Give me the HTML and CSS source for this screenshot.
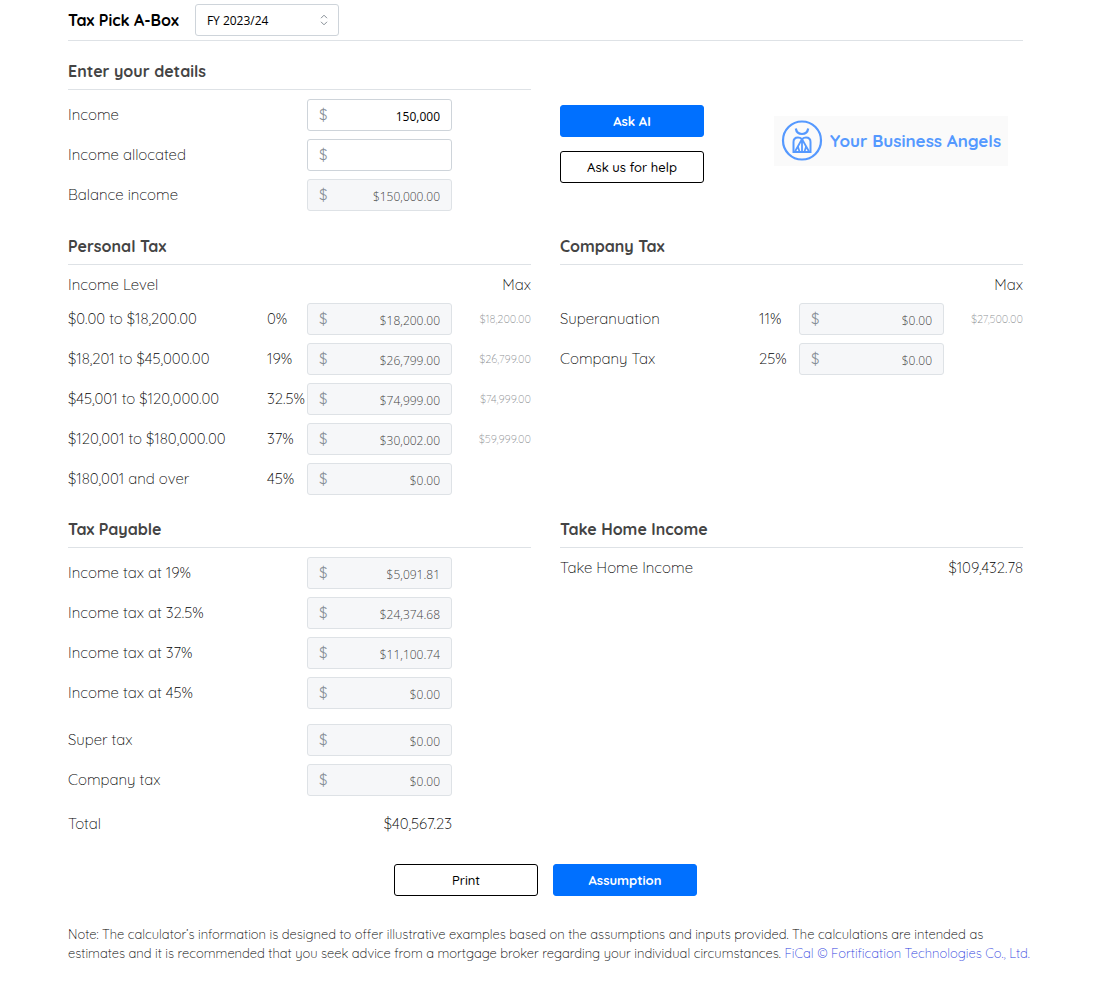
FILE: index.html
```html
<!DOCTYPE html>
<html lang="en">
<head>
    <meta charset="UTF-8">
    <meta name="viewport" content="width=device-width, initial-scale=1.0">
    <title>Tax Pick A-Box</title>
    <link rel="stylesheet" href="styles.css">
</head>
<body>
    <main class="container">
        <header class="page-header">
            <h1><label for="year">Tax Pick A-Box</label></h1>
            <div class="select-box">
                <select id="year" name="year">
                    <option>FY 2023/24</option>
                    <option>FY 2022/23</option>
                </select>
                <svg class="select-icon" viewBox="0 0 8 12" width="8" height="12" aria-hidden="true">
                    <path d="M1 4.2 L4 1.2 L7 4.2 M1 7.8 L4 10.8 L7 7.8"/>
                </svg>
            </div>
        </header>

        <div class="columns details">
            <section>
                <h2>Enter your details</h2>
                <div class="rows">
                    <div class="row">
                        <label for="income">Income</label>
                        <div class="money"><span>$</span><input type="text" id="income" value="150,000"></div>
                    </div>
                    <div class="row">
                        <label for="allocated">Income allocated</label>
                        <div class="money"><span>$</span><input type="text" id="allocated"></div>
                    </div>
                    <div class="row">
                        <label for="balance">Balance income</label>
                        <div class="money disabled"><span>$</span><input type="text" id="balance" value="$150,000.00" disabled></div>
                    </div>
                </div>
            </section>

            <div class="help">
                <div class="help-buttons">
                    <button type="button" class="btn primary">Ask AI</button>
                    <button type="button" class="btn">Ask us for help</button>
                </div>
                <div class="brand">
                    <svg viewBox="0 0 42 42" width="42" height="42" aria-hidden="true">
                        <circle cx="21" cy="20.5" r="19" stroke-width="2.2"/>
                        <path d="M14.8 8.5 C16 15.8 26 15.800 27.200 8.500" stroke-width="2.2"/>
                        <path d="M12.500 32 V22 Q12.500 17.500 17 17.500 Q20 17.500 21 19.500 Q22 17.500 25 17.500 Q29.500 17.500 29.500 22 V32 Z" stroke-width="2"/>
                        <path d="M21 19.500 V32 M20.500 20 L14 31.500 M21.500 20 L28 31.500 M17 27 L18.500 31.500 M25 27 L23.500 31.500" stroke-width="1.8"/>
                    </svg>
                    <span>Your Business Angels</span>
                </div>
            </div>
        </div>

        <div class="columns brackets">
            <section>
                <h2>Personal Tax</h2>
                <div class="rows">
                    <div class="row row-head">
                        <span>Income Level</span>
                        <span class="max-head">Max</span>
                    </div>
                    <div class="row">
                        <label for="level-0">$0.00 to $18,200.00</label>
                        <span class="rate">0%</span>
                        <div class="money disabled"><span>$</span><input type="text" id="level-0" value="$18,200.00" disabled></div>
                        <span class="max">$18,200.00</span>
                    </div>
                    <div class="row">
                        <label for="level-19">$18,201 to $45,000.00</label>
                        <span class="rate">19%</span>
                        <div class="money disabled"><span>$</span><input type="text" id="level-19" value="$26,799.00" disabled></div>
                        <span class="max">$26,799.00</span>
                    </div>
                    <div class="row">
                        <label for="level-32">$45,001 to $120,000.00</label>
                        <span class="rate">32.5%</span>
                        <div class="money disabled"><span>$</span><input type="text" id="level-32" value="$74,999.00" disabled></div>
                        <span class="max">$74,999.00</span>
                    </div>
                    <div class="row">
                        <label for="level-37">$120,001 to $180,000.00</label>
                        <span class="rate">37%</span>
                        <div class="money disabled"><span>$</span><input type="text" id="level-37" value="$30,002.00" disabled></div>
                        <span class="max">$59,999.00</span>
                    </div>
                    <div class="row">
                        <label for="level-45">$180,001 and over</label>
                        <span class="rate">45%</span>
                        <div class="money disabled"><span>$</span><input type="text" id="level-45" value="$0.00" disabled></div>
                    </div>
                </div>
            </section>

            <section>
                <h2>Company Tax</h2>
                <div class="rows">
                    <div class="row row-head">
                        <span class="max-head">Max</span>
                    </div>
                    <div class="row">
                        <label for="super">Superanuation</label>
                        <span class="rate">11%</span>
                        <div class="money disabled"><span>$</span><input type="text" id="super" value="$0.00" disabled></div>
                        <span class="max">$27,500.00</span>
                    </div>
                    <div class="row">
                        <label for="company">Company Tax</label>
                        <span class="rate">25%</span>
                        <div class="money disabled"><span>$</span><input type="text" id="company" value="$0.00" disabled></div>
                    </div>
                </div>
            </section>
        </div>

        <div class="columns results">
            <section>
                <h2>Tax Payable</h2>
                <div class="rows">
                    <div class="row">
                        <label for="tax-19">Income tax at 19%</label>
                        <div class="money disabled"><span>$</span><input type="text" id="tax-19" value="$5,091.81" disabled></div>
                    </div>
                    <div class="row">
                        <label for="tax-32">Income tax at 32.5%</label>
                        <div class="money disabled"><span>$</span><input type="text" id="tax-32" value="$24,374.68" disabled></div>
                    </div>
                    <div class="row">
                        <label for="tax-37">Income tax at 37%</label>
                        <div class="money disabled"><span>$</span><input type="text" id="tax-37" value="$11,100.74" disabled></div>
                    </div>
                    <div class="row">
                        <label for="tax-45">Income tax at 45%</label>
                        <div class="money disabled"><span>$</span><input type="text" id="tax-45" value="$0.00" disabled></div>
                    </div>
                </div>
                <div class="rows other-tax">
                    <div class="row">
                        <label for="super-tax">Super tax</label>
                        <div class="money disabled"><span>$</span><input type="text" id="super-tax" value="$0.00" disabled></div>
                    </div>
                    <div class="row">
                        <label for="company-tax">Company tax</label>
                        <div class="money disabled"><span>$</span><input type="text" id="company-tax" value="$0.00" disabled></div>
                    </div>
                </div>
                <div class="row total">
                    <span>Total</span>
                    <span class="total-value">$40,567.23</span>
                </div>
            </section>

            <section>
                <h2>Take Home Income</h2>
                <div class="take-home">
                    <span>Take Home Income</span>
                    <span>$109,432.78</span>
                </div>
            </section>
        </div>

        <div class="actions">
            <button type="button" class="btn">Print</button>
            <button type="button" class="btn primary">Assumption</button>
        </div>

        <p class="note">Note: The calculator’s information is designed to offer illustrative examples based on the assumptions and inputs provided. The calculations are intended as estimates and it is recommended that you seek advice from a mortgage broker regarding your individual circumstances. <a href="#">FiCal © Fortification Technologies Co., Ltd.</a></p>
    </main>
</body>
</html>
```
FILE: styles.css
```css
:root {
    --primary: #0070ff;
    --text: #000;
    --heading: #444;
    --line: #dee2e6;
    --border: #ced4da;
}

* {
    box-sizing: border-box;
}

body {
    margin: 0;
    background: #fff;
    color: var(--text);
    font-family: Quicksand, Lato, sans-serif;
    font-size: 15px;
    font-weight: 300;
    line-height: 20px;
}

.container {
    padding: 0 73px 20px 68px;
}

.page-header {
    display: flex;
    align-items: center;
    gap: 16px;
    padding: 4px 0;
    border-bottom: 1px solid var(--line);
}

h1, h2 {
    margin: 0;
    font-size: 16px;
    font-weight: 700;
    line-height: 20px;
}

h1 {
    color: #000;
}

h2 {
    padding-bottom: 8px;
    border-bottom: 1px solid var(--line);
    color: var(--heading);
}

.select-box {
    position: relative;
    width: 144px;
}

select {
    appearance: none;
    width: 100%;
    height: 32px;
    padding: 0 11px;
    border: 1px solid var(--border);
    border-radius: 3px;
    background: #fff;
    color: #000;
    font-family: "Open Sans", sans-serif;
    font-size: 12px;
}

.select-icon {
    position: absolute;
    top: 10px;
    right: 11px;
    fill: none;
    stroke: #868e96;
    pointer-events: none;
}

.columns {
    display: grid;
    grid-template-columns: 1fr 1fr;
    gap: 29px;
}

.details {
    margin-top: 20px;
}

.brackets {
    margin-top: 25px;
}

.results {
    margin-top: 24px;
}

.rows {
    display: grid;
    gap: 8px;
    padding-top: 9px;
}

.row {
    display: grid;
    grid-template-columns: 199px 40px 145px 1fr;
    align-items: center;
}

.row-head {
    min-height: 21px;
}

.money {
    display: flex;
    align-items: center;
    grid-column: 3;
    height: 32px;
    padding: 0 11px;
    border: 1px solid var(--border);
    border-radius: 3px;
    background: #fff;
    color: #868e96;
    font-weight: 400;
}

.money input {
    flex: 1;
    min-width: 0;
    padding: 2px 0 0;
    border: 0;
    outline: none;
    background: transparent;
    color: #000;
    font-family: "Open Sans", sans-serif;
    font-size: 12px;
    text-align: right;
}

.money.disabled {
    border-color: var(--line);
    background: #f6f7f9;
}

.money.disabled input {
    color: #444;
    font-weight: 300;
}

.max, .max-head {
    grid-column: 4;
    text-align: right;
}

.max {
    color: #909396;
    font-size: 11px;
}

.other-tax {
    padding-top: 15px;
}

.total {
    margin-top: 18px;
}

.total-value {
    grid-column: 3;
    text-align: right;
}

.take-home {
    display: flex;
    justify-content: space-between;
    padding-top: 10px;
}

.help {
    display: flex;
    align-items: flex-start;
    justify-content: space-between;
    padding: 44px 15px 0 0;
}

.help-buttons {
    display: grid;
    gap: 14px;
}

.btn {
    width: 144px;
    height: 32px;
    border: 1px solid #000;
    border-radius: 3px;
    background: #fff;
    color: #000;
    font-family: inherit;
    font-size: 13px;
    font-weight: 500;
}

.btn.primary {
    border-color: var(--primary);
    background: var(--primary);
    color: #fff;
    font-weight: 700;
}

.brand {
    display: flex;
    align-items: center;
    gap: 7px;
    width: 234px;
    height: 50px;
    margin-top: 11px;
    padding-left: 7px;
    background: #fafafa;
    color: #5599ff;
    font-size: 17px;
    font-weight: 700;
    white-space: nowrap;
}

.brand svg {
    fill: none;
    stroke: currentColor;
}

.actions {
    display: flex;
    justify-content: center;
    gap: 15px;
    margin-top: 30px;
}

.note {
    margin: 29px -12px 0 0;
    font-size: 13px;
    line-height: 19px;
}

.note a {
    color: #2f3fe0;
    text-decoration: none;
}
```
